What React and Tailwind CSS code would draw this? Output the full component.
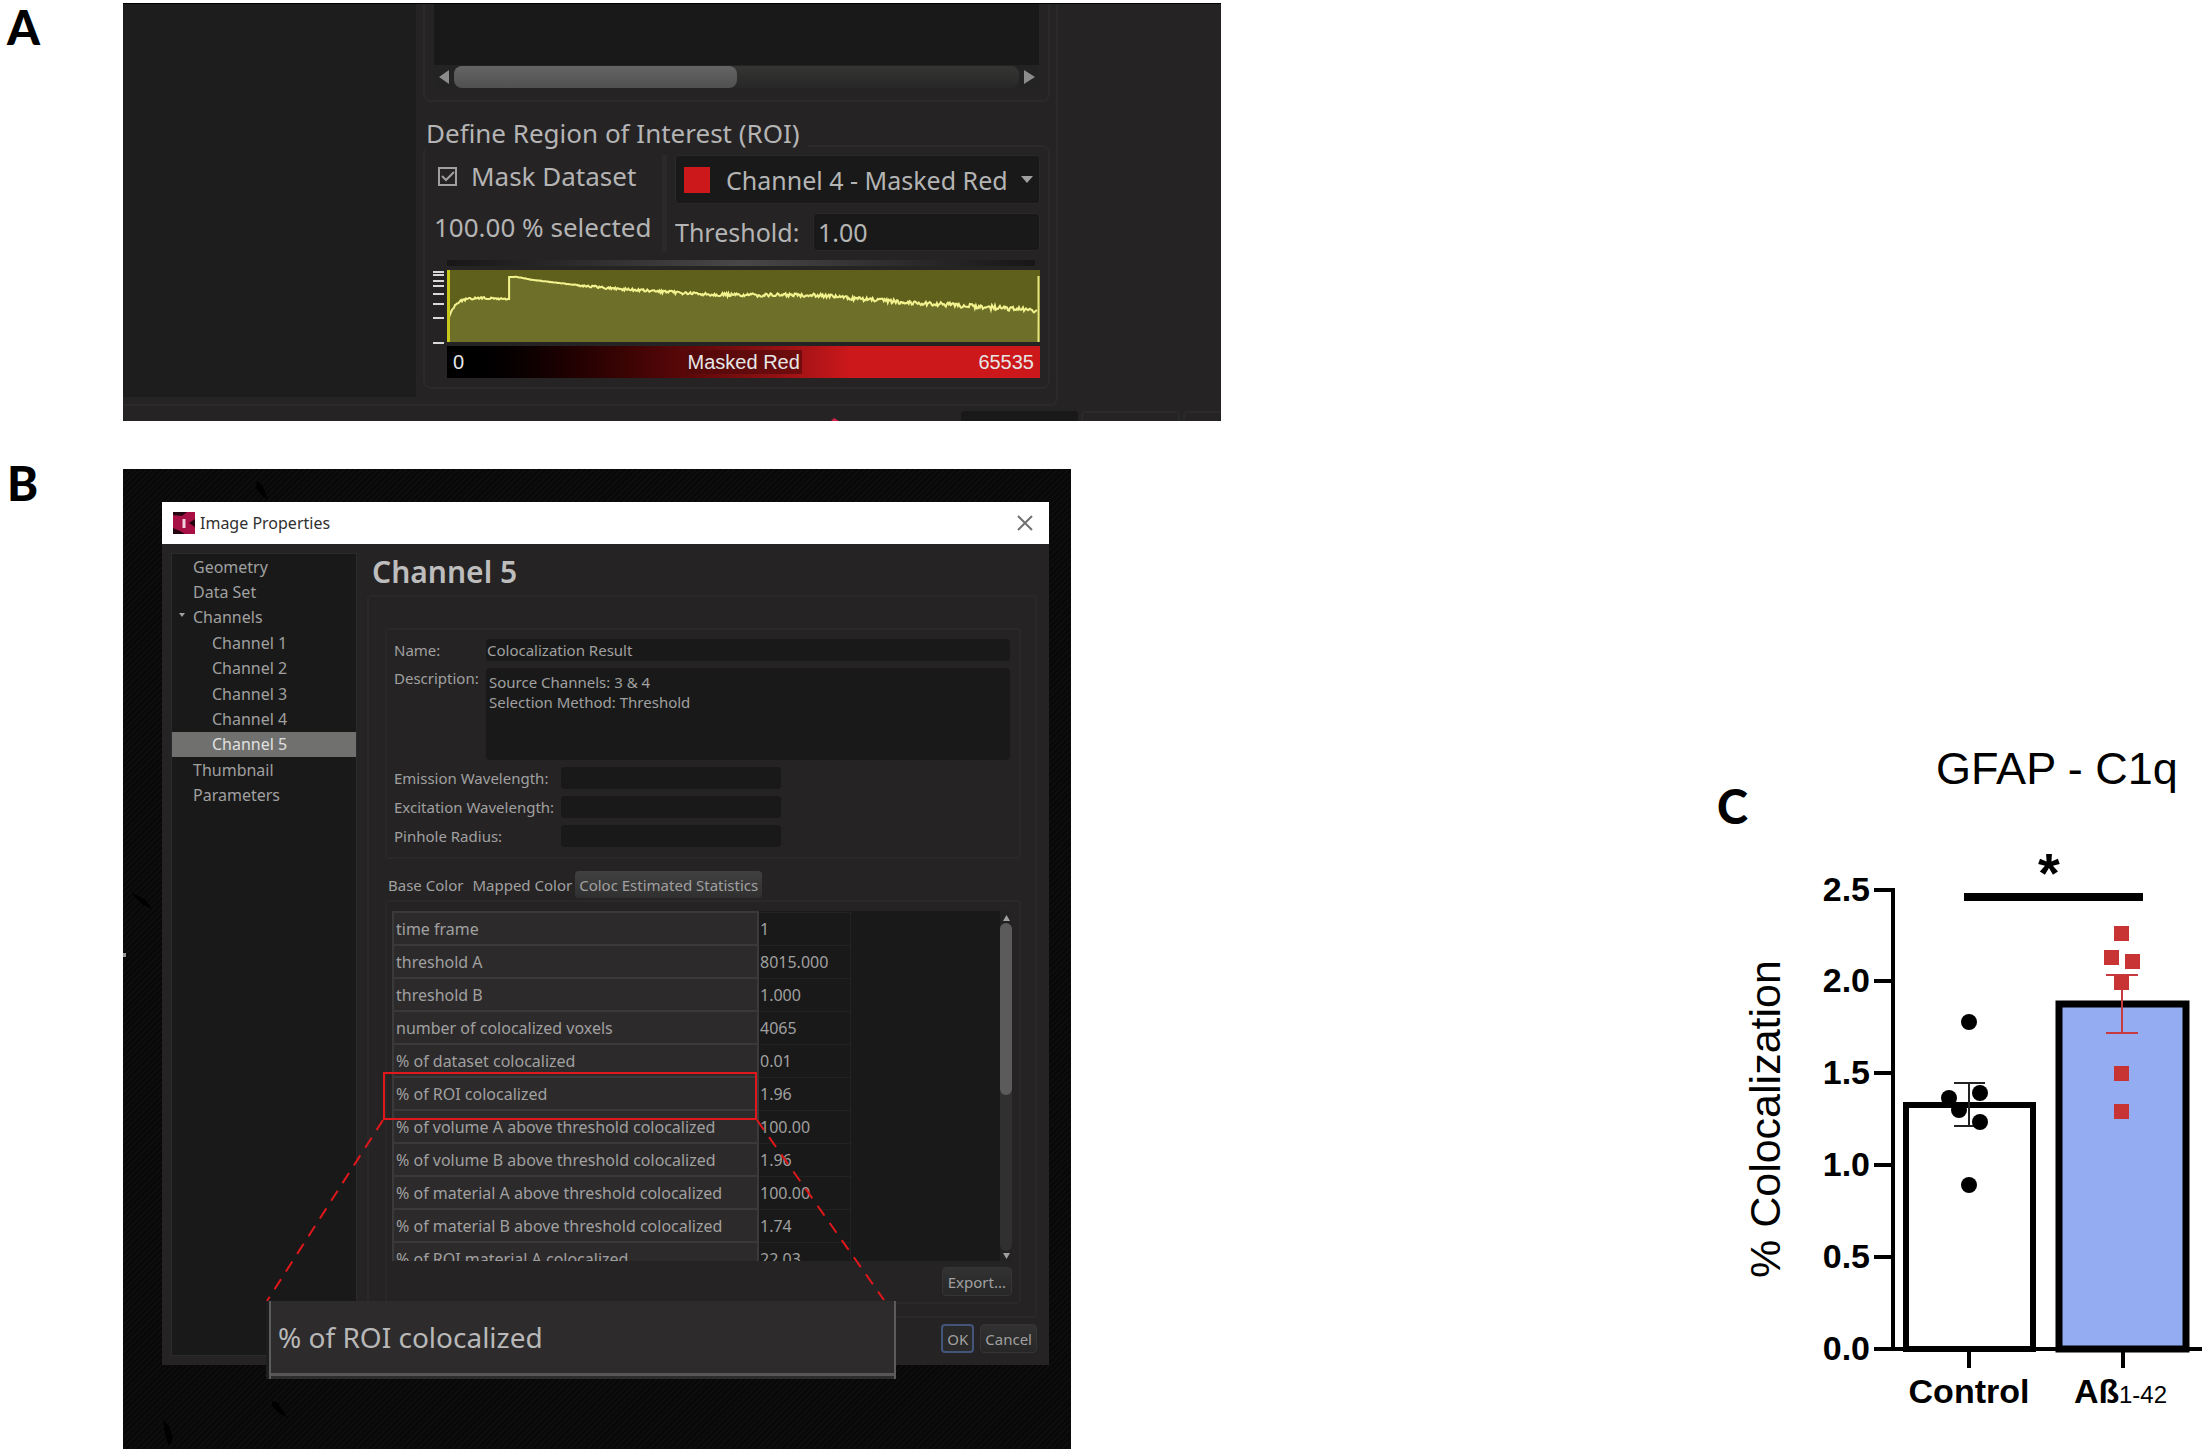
import { useState } from 'react';

const treeItems = [
    { label: 'Geometry' },
    { label: 'Data Set' },
    { label: 'Channels', open: true },
    { label: 'Channel 1', child: true },
    { label: 'Channel 2', child: true },
    { label: 'Channel 3', child: true },
    { label: 'Channel 4', child: true },
    { label: 'Channel 5', child: true },
    { label: 'Thumbnail' },
    { label: 'Parameters' },
];

const stats = [
    ['time frame', '1'],
    ['threshold A', '8015.000'],
    ['threshold B', '1.000'],
    ['number of colocalized voxels', '4065'],
    ['% of dataset colocalized', '0.01'],
    ['% of ROI colocalized', '1.96'],
    ['% of volume A above threshold colocalized', '100.00'],
    ['% of volume B above threshold colocalized', '1.96'],
    ['% of material A above threshold colocalized', '100.00'],
    ['% of material B above threshold colocalized', '1.74'],
    ['% of ROI material A colocalized', '22.03'],
];

// histogram outline, smoothed control points
const curve = [
    [2, 47], [4, 42], [8, 35], [13, 31], [20, 29], [33, 28], [61, 29], [62, 29], [62, 7], [70, 7], [86, 10],
    [120, 14], [160, 18], [203, 21], [253, 24], [286, 25], [340, 25], [370, 25], [413, 29], [453, 32],
    [503, 35], [553, 38], [590, 41],
];

function histogramPoints() {
    const points = [];
    let seed = 7;
    for (let i = 0; i < curve.length - 1; i++) {
        const [x0, y0] = curve[i];
        const [x1, y1] = curve[i + 1];
        points.push([x0, y0]);
        for (let x = x0 + 1; x < x1; x++) {
            seed = (seed * 1103515245 + 12345) % 2147483648;
            const noise = (seed / 2147483648 - 0.5) * (x < 62 ? 2 : x < 130 ? 0.6 : 1.6 + x / 180);
            points.push([x, y0 + ((y1 - y0) * (x - x0)) / (x1 - x0) + noise]);
        }
    }
    return points.map(([x, y]) => `${x},${y.toFixed(1)}`).join(' ');
}

function Histogram() {
    const points = histogramPoints();

    return (
        <div className="flex">
            <svg className="h-[74px] w-[14px] shrink-0" viewBox="0 0 14 74" stroke="#d8d8d8" strokeWidth="2">
                {[2, 5, 11, 16, 24, 34, 48, 73].map(y => (
                    <path key={y} d={`M0 ${y}H11`} />
                ))}
            </svg>
            <svg className="h-[72px] min-w-0 flex-1" viewBox="0 0 592 72" preserveAspectRatio="none">
                <rect width="592" height="72" fill="#60601d" />
                <polygon points={`2,72 ${points} 590,72`} fill="#6e7029" />
                <polyline points={points} fill="none" stroke="#f2f28e" strokeWidth="2" />
                <path d="M1.5 0V72" stroke="#c6c81c" strokeWidth="3" />
                <path d="M590.5 6V72" stroke="#e6e67c" strokeWidth="2" />
            </svg>
        </div>
    );
}

function RoiPanel() {
    const [masked, setMasked] = useState(true);

    return (
        <div className="mt-[3px] w-full max-w-[1098px] overflow-hidden border-t border-black bg-[#252324] font-['Noto_Sans',sans-serif] text-[26px] leading-8 text-[#b4b4b4]">
            <div className="flex max-w-[935px] rounded-br-lg border-r-2 border-b-2 border-[#2a2a2a] pb-[7px]">
                <div className="min-w-0 flex-1 bg-[#1d1d1d]"></div>
                <div className="w-[640px] pr-[6px] pb-2 pl-[7px]">
                    <div className="rounded-b-lg border-x-2 border-b-2 border-[#2a2a2a] px-[9px] pb-[11px]">
                        <div className="bg-[#191919] pt-[61px]">
                            <div className="flex h-[24px] items-center gap-[5px] bg-[#242323] px-1">
                                <svg className="h-[14px] w-[11px]" viewBox="0 0 11 14"><path d="M11 0V14L1 7z" fill="#8c8c8c" /></svg>
                                <div className="h-[22px] flex-1 rounded-lg bg-linear-to-b from-[#353534] to-[#272727]">
                                    <div className="h-full w-1/2 rounded-lg bg-linear-to-b from-[#656565] to-[#505050]"></div>
                                </div>
                                <svg className="h-[14px] w-[11px]" viewBox="0 0 11 14"><path d="M0 0V14L11 7z" fill="#8c8c8c" /></svg>
                            </div>
                        </div>
                    </div>
                    <h2 className="relative mt-[15px] -mb-1 w-fit bg-[#252324] pr-2 pl-[3px]">Define Region of Interest (ROI)</h2>
                    <div className="rounded-lg border-2 border-[#2a2a2a] px-2 pt-2 pb-[9px]">
                        <div className="flex h-[97px]">
                            <div className="flex w-[229px] flex-col gap-[19px] pt-[5px]">
                                <label className="flex items-center gap-[14px] pl-[5px]">
                                    <span className="relative flex h-[19px] w-[19px]">
                                        <input type="checkbox" checked={masked} onChange={e => setMasked(e.target.checked)} className="h-[19px] w-[19px] appearance-none border-2 border-[#a0a0a0]" />
                                        {masked && (
                                            <svg className="pointer-events-none absolute inset-0" viewBox="0 0 19 19" fill="none" stroke="#a0a0a0" strokeWidth="2"><path d="M4 9l4 4 8-8" /></svg>
                                        )}
                                    </span>
                                    Mask Dataset
                                </label>
                                <p className="pl-px whitespace-nowrap">100.00 % selected</p>
                            </div>
                            <div className="w-[5px] bg-[#2a2a2a]"></div>
                            <div className="flex min-w-0 flex-1 flex-col gap-[9px] pl-2 text-[25px]">
                                <div className="relative flex h-[49px] items-center rounded border border-[#292929] bg-[#191919] pl-2">
                                    <span className="h-[26px] w-[26px] bg-[#cc181b]"></span>
                                    <select aria-label="Channel" className="h-full min-w-0 flex-1 appearance-none bg-transparent pl-4">
                                        <option>Channel 4 - Masked Red</option>
                                    </select>
                                    <svg className="pointer-events-none absolute right-[6px] h-[7px] w-3" viewBox="0 0 12 7"><path d="M0 0H12L6 7z" fill="#a0a0a0" /></svg>
                                </div>
                                <div className="flex h-[38px] items-center justify-between">
                                    <label htmlFor="threshold">Threshold:</label>
                                    <input id="threshold" defaultValue="1.00" className="h-full w-[227px] rounded border border-[#292929] bg-[#191919] pl-1" />
                                </div>
                            </div>
                        </div>
                        <div className="mt-2 mr-[5px] mb-1 ml-[14px] h-[6px] bg-linear-to-r from-[#171717] via-[#484848] to-[#171717]"></div>
                        <Histogram />
                        <div className="mt-[2px] ml-[14px] flex h-8 items-center justify-between bg-linear-to-r from-black via-[#7c0e10] via-50% to-[#cc181b] to-68% px-[6px] font-['Liberation_Sans',sans-serif] text-[20px] leading-6 text-[#e6e6e6]">
                            <span className="w-14">0</span>
                            <span className="bg-[#4c080a]/60 px-[2px]">Masked Red</span>
                            <span>65535</span>
                        </div>
                    </div>
                </div>
            </div>
            <div className="flex h-[15px] items-end justify-end gap-[3px]">
                <svg className="mr-[119px] h-[3px] w-2" viewBox="0 0 8 3"><path d="M0 3L3 0L8 3z" fill="#d8204c" /></svg>
                <div className="h-[10px] w-[117px] rounded-t bg-[#191919]"></div>
                <div className="h-[10px] w-[99px] rounded-t border-x-2 border-t-2 border-[#2a2a2a]"></div>
                <div className="h-[10px] w-[38px] rounded-tl border-t-2 border-l-2 border-[#2a2a2a]"></div>
            </div>
        </div>
    );
}

function Field({ id, label }) {
    return (
        <div className="flex h-[22px] items-center">
            <label htmlFor={id} className="w-[167px]">{label}</label>
            <input id={id} className="h-full w-[220px] rounded-sm bg-[#191919]" />
        </div>
    );
}

function PropertiesDialog() {
    const [selected, setSelected] = useState('Channel 5');

    return (
        <div className="bg-[#252324] text-[15px] leading-5 text-[#a0a0a0]">
            <div className="flex h-[42px] items-center bg-white pr-4 pl-[11px]">
                <svg className="h-[22px] w-[22px]" viewBox="0 0 22 22">
                    <rect width="22" height="22" fill="#a80f45" />
                    <path d="M0 0H14L9 4L0 3zM0 16L7 19L12 22H0zM22 7L16 11L22 15z" fill="#26040f" />
                    <path d="M11 7V16" stroke="#f0d0dc" strokeWidth="3" />
                </svg>
                <h2 className="flex-1 pl-[5px] text-[16px] text-[#303030]">Image Properties</h2>
                <button type="button" aria-label="Close">
                    <svg className="h-4 w-4" viewBox="0 0 16 16" stroke="#707070" strokeWidth="2"><path d="M1 1L15 15M15 1L1 15" /></svg>
                </button>
            </div>
            <div className="flex gap-[10px] py-[9px] pr-3 pl-[9px]">
                <nav className="w-[186px] shrink-0 border border-[#282c2e] bg-[#191919] text-[16px]">
                    <ul className="grid h-[254px] auto-rows-fr">
                        {treeItems.map(item => (
                            <li key={item.label} className="flex">
                                <button
                                    type="button"
                                    onClick={() => setSelected(item.label)}
                                    className={`relative w-full text-left ${item.child ? 'pl-10' : 'pl-[21px]'} ${selected === item.label ? 'bg-[#70706f] text-[#e0e0e0]' : ''}`}
                                >
                                    {item.open && (
                                        <svg className="absolute top-2 left-[7px] h-1 w-[6px]" viewBox="0 0 6 4"><path d="M0 0H6L3 4z" fill="#a0a0a0" /></svg>
                                    )}
                                    {item.label}
                                </button>
                            </li>
                        ))}
                    </ul>
                </nav>
                <div className="min-w-0 flex-1 pb-[3px]">
                    <h3 className="h-[42px] pl-[5px] text-[30px] leading-[38px] font-semibold text-[#bdbdbd]">{selected}</h3>
                    <div className="rounded border-2 border-[#292929] pt-[31px] pr-[14px] pb-3 pl-4">
                        <div className="flex h-[231px] flex-col gap-[7px] rounded border-2 border-[#292929] py-[9px] pr-[9px] pl-[7px]">
                            <div className="flex h-[22px] items-center">
                                <label htmlFor="name" className="w-[92px]">Name:</label>
                                <input id="name" defaultValue="Colocalization Result" className="h-full min-w-0 flex-1 rounded-sm bg-[#191919] pl-px" />
                            </div>
                            <div className="flex h-[92px]">
                                <label htmlFor="description" className="w-[92px]">Description:</label>
                                <textarea id="description" defaultValue={'Source Channels: 3 & 4\nSelection Method: Threshold'} className="h-full min-w-0 flex-1 resize-none rounded-sm bg-[#191919] pt-1 pl-[3px]" />
                            </div>
                            <Field id="emission" label="Emission Wavelength:" />
                            <Field id="excitation" label="Excitation Wavelength:" />
                            <Field id="pinhole" label="Pinhole Radius:" />
                        </div>
                        <div role="tablist" className="mt-3 flex h-[27px] items-center">
                            <button type="button" role="tab" className="px-[3px]">Base Color</button>
                            <button type="button" role="tab" className="ml-[3px] px-[3px]">Mapped Color</button>
                            <button type="button" role="tab" aria-selected="true" className="h-full rounded-sm bg-linear-to-b from-[#424142] to-[#302f2f] px-1">Coloc Estimated Statistics</button>
                        </div>
                        <div className="mt-[2px] rounded border-2 border-[#292929] pt-[9px] pr-[7px] pb-[6px] pl-[5px]">
                            <div className="flex h-[350px] overflow-hidden bg-[#191919]">
                                <div className="flex-1 overflow-hidden">
                                    <table className="border-collapse text-left text-[16px]">
                                        <tbody>
                                            {stats.map(([name, value]) => (
                                                <tr key={name} className="h-[33px]">
                                                    <th scope="row" className="w-[365px] border-2 border-[#3a3a3a] bg-[#2c2a2b] pl-[2px] font-normal whitespace-nowrap">{name}</th>
                                                    <td className="w-[92px] border border-[#222222] pl-px">{value}</td>
                                                </tr>
                                            ))}
                                        </tbody>
                                    </table>
                                </div>
                                <div className="flex w-3 flex-col items-center gap-[2px] bg-[#222222] pt-1 pb-[2px]">
                                    <svg className="h-[6px] w-[7px]" viewBox="0 0 7 6"><path d="M0 6H7L3.5 0z" fill="#a0a0a0" /></svg>
                                    <div className="w-full flex-1 rounded-md bg-[#303030]">
                                        <div className="h-[172px] rounded-md bg-[#5c5b5b]"></div>
                                    </div>
                                    <svg className="h-[6px] w-[7px]" viewBox="0 0 7 6"><path d="M0 0H7L3.5 6z" fill="#a0a0a0" /></svg>
                                </div>
                            </div>
                            <div className="mt-[6px] flex justify-end">
                                <button type="button" className="h-[29px] rounded border border-[#353535] bg-linear-to-b from-[#323232] to-[#272727] px-[5px]">Export...</button>
                            </div>
                        </div>
                    </div>
                    <div className="mt-[6px] flex justify-end gap-[6px]">
                        <button type="button" className="h-[29px] rounded border-2 border-[#44557c] bg-[#2a2a2a] px-1">OK</button>
                        <button type="button" className="h-[29px] rounded border border-[#353535] bg-linear-to-b from-[#323232] to-[#272727] px-1">Cancel</button>
                    </div>
                </div>
            </div>
        </div>
    );
}

function PropertiesPanel() {
    return (
        <div className="relative w-full max-w-[948px] bg-[repeating-linear-gradient(135deg,#0d0d0d_0_2px,#080808_2px_4px)] pt-[33px] pr-[22px] pb-[84px] pl-[39px] font-['Noto_Sans',sans-serif]">
            <svg className="absolute top-0 left-0 h-[979px] w-[948px]" viewBox="0 0 948 979" fill="black">
                <path d="M134 12l5 4 6 14-5-2-7-9zM8 424l14 6 7 10-9-4zM149 932l6 2 9 14-7-3-8-8zM40 951l6 6 4 12-4 8-4-12z" />
                <path d="M0 484h3v4H0z" fill="#999999" />
            </svg>
            <div className="relative">
                <PropertiesDialog />
            </div>
            {/* highlighted row and its leader lines */}
            <svg className="pointer-events-none absolute top-0 left-0 h-[979px] w-[948px]" viewBox="0 0 948 979" fill="none" stroke="#e0171b">
                <rect x="261" y="604" width="372" height="46" strokeWidth="2" />
                <path d="M260 651L144 832M634 651L761 831" strokeWidth="2" strokeDasharray="12 9" />
            </svg>
            <div className="absolute top-[832px] left-[143px] flex h-[78px] w-[630px] items-center border-l-[3px] border-[#1e1e1e] bg-[#2d2b2c]">
                <p className="flex h-full w-full flex-col border-x-2 border-[#5c5c5c]">
                    <span className="flex-1 pt-[18px] pl-[7px] text-[28px] leading-9 text-[#b8b8b8]">% of ROI colocalized</span>
                    <span className="mb-[3px] h-[3px] bg-[#575757]"></span>
                </p>
            </div>
        </div>
    );
}

const axisTicks = [['2.5', 890], ['2.0', 981], ['1.5', 1073], ['1.0', 1165], ['0.5', 1257], ['0.0', 1349]];
const controlDots = [[1969, 1022], [1949, 1098], [1980, 1093], [1959, 1110], [1980, 1122], [1969, 1185]];
const treatedDots = [[2122, 934], [2112, 958], [2133, 962], [2122, 983], [2122, 1074], [2122, 1112]];

function BarChart() {
    return (
        <svg className="h-[709px] w-[459px] overflow-visible font-['Liberation_Sans',sans-serif]" viewBox="1749 740 459 709" role="img" aria-label="GFAP - C1q">
            <text x="2057" y="784" fontSize="45" textAnchor="middle">GFAP - C1q</text>
            <text x="2049" y="892" fontSize="56" fontWeight="bold" textAnchor="middle">*</text>
            <path d="M1964 897H2143" stroke="black" strokeWidth="8" />
            <text transform="translate(1780 1278) rotate(-90)" fontSize="43">% Colocalization</text>

            <rect x="1906" y="1105" width="127" height="244" fill="white" stroke="black" strokeWidth="6" />
            <rect x="2059" y="1004" width="127" height="345" fill="#94adf2" stroke="black" strokeWidth="7" />
            <path d="M1893 888V1351M1874 1349H2202M1969 1349V1368M2123 1349V1368" stroke="black" strokeWidth="4" fill="none" />
            {axisTicks.map(([label, y]) => (
                <g key={label}>
                    <path d={`M1874 ${y}H1893`} stroke="black" strokeWidth="4" />
                    <text x="1870" y={y + 11} fontSize="34" fontWeight="bold" textAnchor="end">{label}</text>
                </g>
            ))}

            <path d="M1954 1083H1985M1954 1126H1985M1969 1083V1126" stroke="#222222" strokeWidth="2" />
            {controlDots.map(([x, y]) => (
                <circle key={y} cx={x} cy={y} r="8" />
            ))}
            <path d="M2106 975H2138M2106 1033H2138M2122 975V1033" stroke="#c63a40" strokeWidth="2" />
            {treatedDots.map(([x, y]) => (
                <rect key={y} x={x - 8} y={y - 8} width="15" height="15" fill="#c83434" />
            ))}

            <text x="1969" y="1403" fontSize="34" fontWeight="bold" textAnchor="middle">Control</text>
            <text x="2074" y="1403" fontSize="34" fontWeight="bold">Aß</text>
            <text x="2119" y="1403" fontSize="24">1-42</text>
        </svg>
    );
}

export default function App() {
    return (
        <main className="flex min-h-screen justify-between bg-white pb-1 text-black">
            <div className="flex min-w-0 flex-1 flex-col gap-12">
                <section className="flex">
                    <h1 className="w-[123px] shrink-0 pl-[7px] font-['Lato',sans-serif] text-[47px] leading-[54px] font-black">A</h1>
                    <RoiPanel />
                </section>
                <section className="flex items-start">
                    <h1 className="-mt-[13px] w-[123px] shrink-0 pl-[7px] font-['Lato',sans-serif] text-[47px] leading-[54px] font-black">B</h1>
                    <PropertiesPanel />
                </section>
            </div>
            <section className="flex self-end">
                <h1 className="mt-[39px] w-8 font-['Lato',sans-serif] text-[47px] leading-[54px] font-black">C</h1>
                <BarChart />
            </section>
        </main>
    );
}
